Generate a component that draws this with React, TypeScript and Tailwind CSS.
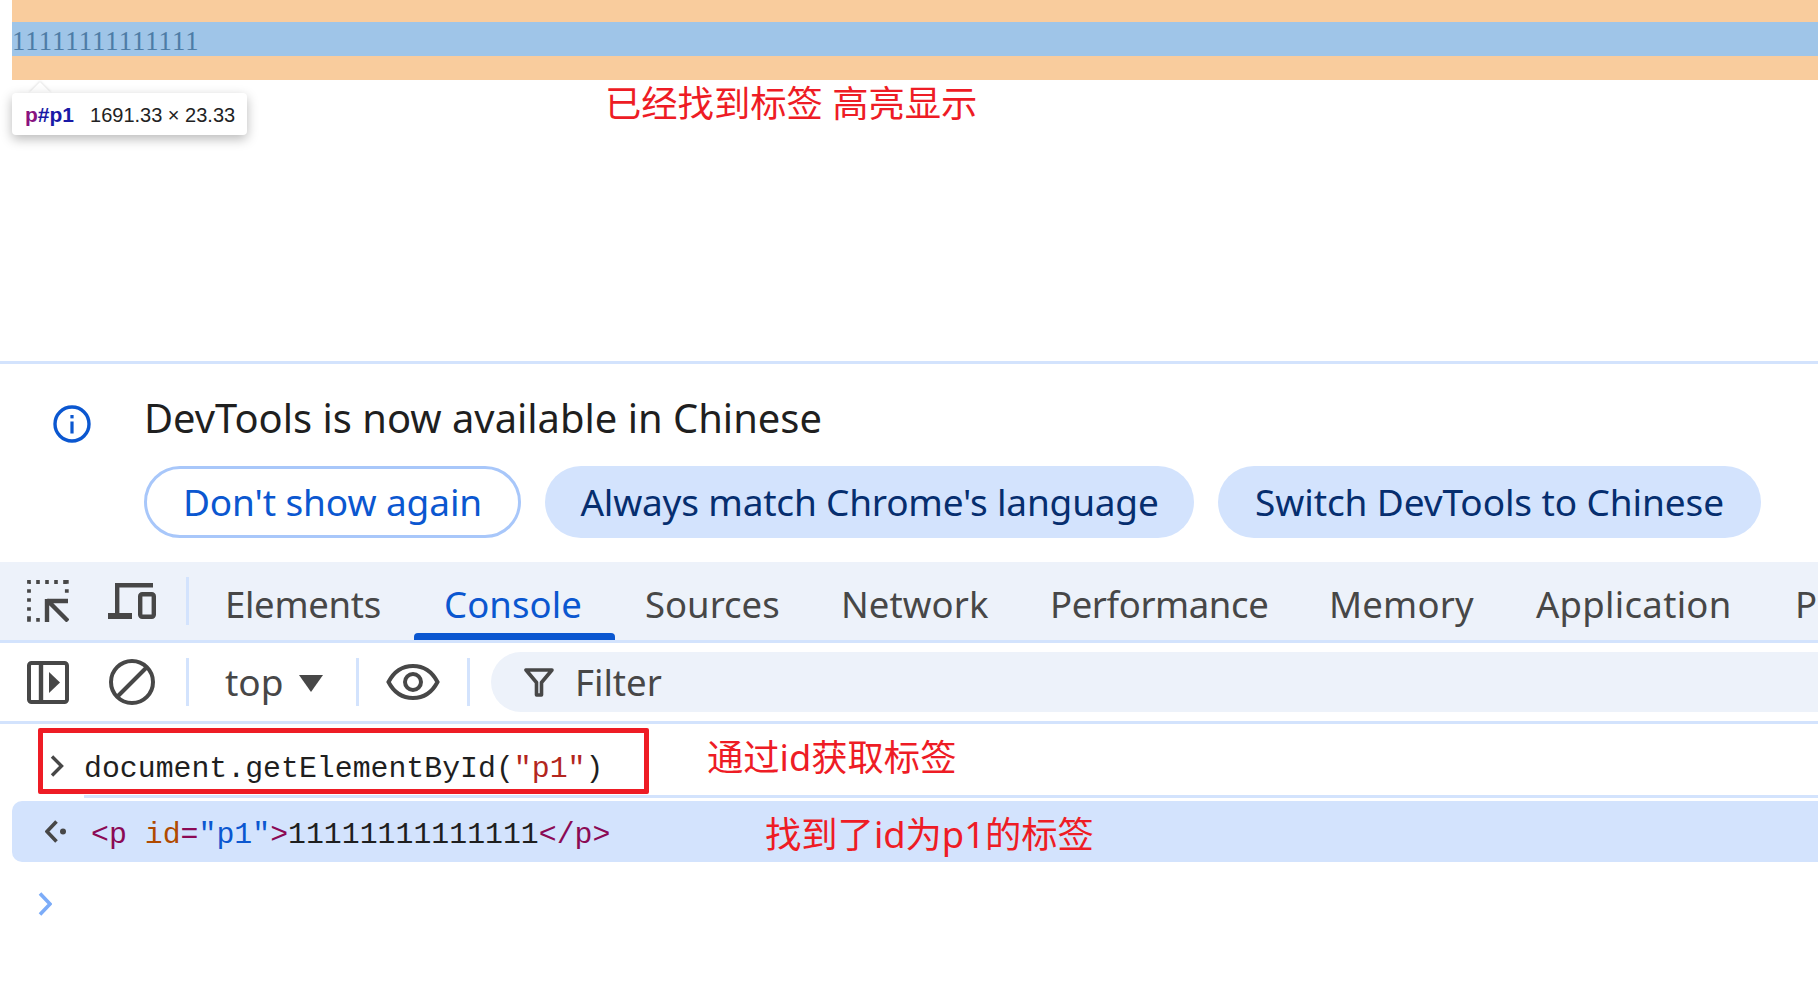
const SANS = "font-['Noto_Sans','Noto_Sans_CJK_SC',sans-serif]";

function Sep() {
  return <div className="w-[3px] h-[48px] bg-[#d3e3fd] shrink-0" />;
}

function Tab({ label, active, cls }: { label: string; active?: boolean; cls: string }) {
  return (
    <div
      className={
        "h-full flex items-center shrink-0 text-[36.5px] pt-[6px] " +
        cls +
        (active ? " text-[#0b57d0]" : " text-[#474747]")
      }
    >
      {label}
    </div>
  );
}

export default function App() {
  return (
    <div className={"w-[1818px] h-[983px] overflow-hidden bg-white flex flex-col relative " + SANS}>
      {/* Inspected page */}
      <div className="h-[364px] shrink-0 border-b-[3px] border-[#d3e3fd] pl-[12px] relative">
        <div className="h-[80px] bg-[#f9cc9d] pt-[22px]">
          <div className="h-[34px] bg-[#9fc5e8] font-['Liberation_Serif',serif] [font-kerning:none] text-[26.67px] leading-[34px] text-[#4d7ca6] pt-[2px]">
            11111111111111
          </div>
        </div>
        <div className="absolute left-[29px] top-[82px] w-0 h-0 border-l-[11px] border-r-[11px] border-b-[11px] border-l-transparent border-r-transparent border-b-white drop-shadow-[0_-1px_1px_rgba(0,0,0,0.12)]" />
        <div className="absolute left-[12px] top-[93px] w-[235px] h-[42px] bg-white rounded-[4px] shadow-[0_4px_12px_rgba(0,0,0,0.28)] flex items-center pl-[13px] pt-[1px] font-['Liberation_Sans',sans-serif] text-[20px]">
          <span className="font-bold text-[21px] text-[#881280]">p</span>
          <span className="font-bold text-[21px] text-[#1a1aa6]">#p1</span>
          <span className="ml-[16px] text-[#222222]">1691.33 × 23.33</span>
        </div>
        <div className="absolute left-[605px] top-[79px] text-[36.3px] leading-[48px] text-[#ee1c25] whitespace-pre">
          已经找到标签 高亮显示
        </div>
      </div>

      {/* Language infobar */}
      <div className="h-[198px] shrink-0 flex pl-[53px]">
        <svg width="38" height="38" viewBox="0 0 38 38" fill="none" className="mt-[41px] shrink-0">
          <circle cx="19" cy="19" r="17" stroke="#0b57d0" strokeWidth="3.4" />
          <rect x="17.4" y="16.5" width="3.2" height="12" fill="#0b57d0" />
          <rect x="17.4" y="10" width="3.2" height="3.4" fill="#0b57d0" />
        </svg>
        <div className="ml-[53px] flex flex-col">
          <div className="h-[102px] pt-[30px] text-[39.9px] leading-[48px] text-[#1f1f1f] whitespace-nowrap">
            DevTools is now available in Chinese
          </div>
          <div className="flex gap-[24px] h-[72px] text-[37px] tracking-[-0.1px]">
            <div className="w-[377px] rounded-full border-[3px] border-[#a8c7fa] text-[#0b57d0] flex items-center justify-center">
              Don't show again
            </div>
            <div className="w-[649px] rounded-full bg-[#d3e3fd] text-[#062e6f] flex items-center justify-center tracking-[-0.2px]">
              Always match Chrome's language
            </div>
            <div className="w-[543px] rounded-full bg-[#d3e3fd] text-[#062e6f] flex items-center justify-center">
              Switch DevTools to Chinese
            </div>
          </div>
        </div>
      </div>

      {/* Panel tabs */}
      <div className="h-[81px] shrink-0 bg-[#edf2fa] border-b-[3px] border-[#d3e3fd] flex items-center relative overflow-hidden">
        <svg width="42" height="42" viewBox="0 0 42 42" fill="none" className="ml-[27px] shrink-0">
          <path d="M0 2V0H2M8 0H12M18 0H22M28 0H32M38 0H42V2M42 8V12M0 8V12M0 18V22M0 28V32M0 38V42H2M8 42H12" transform="translate(2 2) scale(0.9)" stroke="#474747" strokeWidth="4.2" />
          <path d="M20 21H41M20 19V42M20 20L41 41" stroke="#474747" strokeWidth="4.4" />
        </svg>
        <svg width="48" height="36" viewBox="0 0 48 36" fill="none" className="ml-[39px] shrink-0">
          <path d="M45 2.2H9.2V32" stroke="#474747" strokeWidth="4.4" />
          <rect x="0" y="30" width="24" height="6" fill="#474747" />
          <rect x="32.2" y="11.2" width="13.6" height="22.6" rx="2" stroke="#474747" strokeWidth="4.4" />
        </svg>
        <div className="ml-[30px]">
          <Sep />
        </div>
        <Tab label="Elements" cls="ml-[36px] w-[188px] tracking-[-0.3px]" />
        <Tab label="Console" active cls="w-[201px] pl-[31px] tracking-[0.1px]" />
        <Tab label="Sources" cls="ml-[31px] w-[196px]" />
        <Tab label="Network" cls="w-[209px] tracking-[0.1px]" />
        <Tab label="Performance" cls="w-[279px] tracking-[-0.4px]" />
        <Tab label="Memory" cls="w-[207px] tracking-[0.2px]" />
        <Tab label="Application" cls="w-[259px] tracking-[0.3px]" />
        <Tab label="P" cls="" />
        <div className="absolute left-[414px] bottom-0 w-[201px] h-[7px] bg-[#0b57d0] rounded-t-[4px]" />
      </div>

      {/* Console toolbar */}
      <div className="h-[81px] shrink-0 border-b-[3px] border-[#d3e3fd] flex items-center">
        <svg width="42" height="43" viewBox="0 0 42 43" fill="none" className="ml-[27px] shrink-0">
          <rect x="2" y="2" width="38" height="39" rx="2.5" stroke="#474747" strokeWidth="4" />
          <path d="M14 2V41" stroke="#474747" strokeWidth="4.4" />
          <path d="M22 11L33 21.5L22 32Z" fill="#474747" />
        </svg>
        <svg width="46" height="46" viewBox="0 0 46 46" fill="none" className="ml-[40px] shrink-0">
          <circle cx="23" cy="23" r="21" stroke="#474747" strokeWidth="4" />
          <path d="M8 38L38 8" stroke="#474747" strokeWidth="4" />
        </svg>
        <div className="ml-[31px]">
          <Sep />
        </div>
        <div className="ml-[36px] text-[37px] text-[#474747] w-[74px]">top</div>
        <svg width="24" height="17" viewBox="0 0 24 17" className="shrink-0 mt-[3px]">
          <path d="M0 0H24L12 17Z" fill="#474747" />
        </svg>
        <div className="ml-[33px]">
          <Sep />
        </div>
        <svg width="54" height="36" viewBox="0 0 54 36" fill="none" className="ml-[27px] shrink-0">
          <path d="M2.5 18C8 7.5 17 2 27 2C37 2 46 7.5 51.5 18C46 28.5 37 34 27 34C17 34 8 28.5 2.5 18Z" stroke="#474747" strokeWidth="4" />
          <circle cx="27" cy="18" r="8" stroke="#474747" strokeWidth="4" />
        </svg>
        <div className="ml-[27px]">
          <Sep />
        </div>
        <div className="ml-[21px] flex-1 h-[60px] rounded-l-full bg-[#edf2fa] flex items-center pl-[33px]">
          <svg width="30" height="29" viewBox="0 0 30 29" fill="none" className="shrink-0">
            <path d="M2 2H28L17.5 14.5V27H12.5V14.5Z" stroke="#474747" strokeWidth="3.6" strokeLinejoin="round" />
          </svg>
          <span className="ml-[21px] text-[36.6px] text-[#474747]">Filter</span>
        </div>
      </div>

      {/* Console */}
      <div className="flex-1 relative font-['Liberation_Mono',monospace] text-[29.85px] leading-[61px] whitespace-pre">
        <div className="h-[71px] flex">
          <svg width="14" height="22" viewBox="0 0 14 22" fill="none" className="ml-[50px] mt-[31px] shrink-0">
            <path d="M2 1.5L11.5 11L2 20.5" stroke="#474747" strokeWidth="3.4" />
          </svg>
          <div className="ml-[20px] mt-[15px] text-[#1f1f1f]">
            document.getElementById(<span className="text-[#b3261e]">"p1"</span>)
          </div>
        </div>
        <div className="h-[3px] ml-[84px] bg-[#d3e3fd]" />
        <div className="h-[61px] mt-[3px] ml-[12px] bg-[#d3e3fd] rounded-l-[10px] flex">
          <svg width="28" height="24" viewBox="0 0 28 24" fill="none" className="ml-[33px] mt-[19px] shrink-0">
            <path d="M11.5 1.5L2 11.5L11.5 21.5" stroke="#474747" strokeWidth="3.6" />
            <circle cx="18" cy="11.5" r="3" fill="#474747" />
          </svg>
          <div className="ml-[18px] pt-[7px] leading-[54px] text-[#1f1f1f]">
            <span className="text-[#8b0a55]">&lt;p </span>
            <span className="text-[#b04a00]">id</span>
            <span className="text-[#8b0a55]">=</span>
            <span className="text-[#0b57d0]">"p1"</span>
            <span className="text-[#8b0a55]">&gt;</span>
            11111111111111
            <span className="text-[#8b0a55]">&lt;/p&gt;</span>
          </div>
        </div>
        <svg width="14" height="24" viewBox="0 0 14 24" fill="none" className="ml-[38px] mt-[30px]">
          <path d="M2 1.5L12 12L2 22.5" stroke="#7cacf8" strokeWidth="3.6" />
        </svg>

        {/* Annotations */}
        <div className="absolute left-[38px] top-[4px] w-[611px] h-[66px] border-[5px] border-[#ee1c25] rounded-[2px]" />
        <div className={"absolute left-[707px] top-[9px] text-[36.3px] leading-[48px] text-[#ee1c25] " + SANS}>
          通过id获取标签
        </div>
        <div className={"absolute left-[765px] top-[86px] text-[36.3px] leading-[48px] text-[#ee1c25] " + SANS}>
          找到了id为p1的标签
        </div>
      </div>
    </div>
  );
}
